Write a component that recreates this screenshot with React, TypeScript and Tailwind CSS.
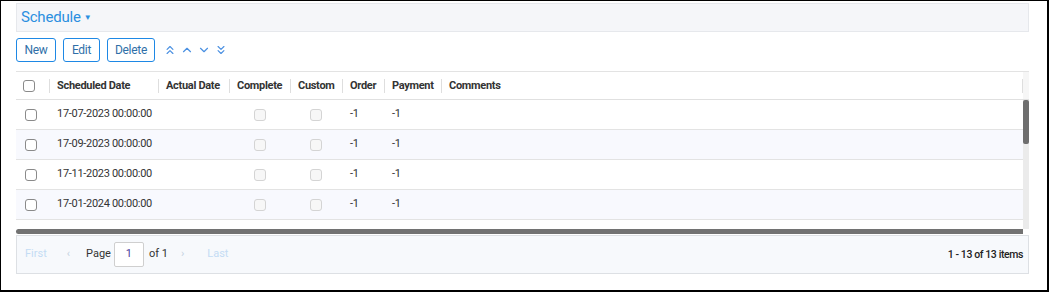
import {ChevronDown, ChevronUp, ChevronsDown, ChevronsUp} from 'lucide-react';

type Row = {scheduled: string; actual: string; order: string; payment: string; comments: string};

const rows: Row[] = [
  {scheduled: '17-07-2023 00:00:00', actual: '', order: '-1', payment: '-1', comments: ''},
  {scheduled: '17-09-2023 00:00:00', actual: '', order: '-1', payment: '-1', comments: ''},
  {scheduled: '17-11-2023 00:00:00', actual: '', order: '-1', payment: '-1', comments: ''},
  {scheduled: '17-01-2024 00:00:00', actual: '', order: '-1', payment: '-1', comments: ''},
];

const cols = 'grid grid-cols-[33px_109px_71px_61px_52px_42px_57px_1fr]';

function Box({disabled}: {disabled?: boolean}) {
  return (
    <span
      className={
        disabled
          ? 'block w-[12px] h-[12px] rounded-[3px] border border-[#d4d4d4] bg-[#f7f7f7]'
          : 'block w-[12px] h-[12px] rounded-[3px] border border-[#8a8a8a] bg-white'
      }
    />
  );
}

function Head({label}: {label: string}) {
  return (
    <div className="flex items-center h-full">
      <span className="w-px h-[14px] bg-[#dedede]" />
      <span className="pl-[7px] pt-[2px] font-bold text-[#333] whitespace-nowrap">{label}</span>
    </div>
  );
}

export default function App() {
  return (
    <div
      className="w-[1049px] h-[292px] bg-white border-l border-t border-r-2 border-b-2 border-black text-[11px] tracking-[-0.3px] text-[#333] overflow-hidden"
      style={{fontFamily: 'Roboto, "Liberation Sans", sans-serif'}}
    >
      <div className="pl-[15px] pr-[18px] pt-[2px]">
        {/* title bar */}
        <div className="h-[29px] flex items-center pl-[4px] bg-[#f5f6f9] border border-[#e6e8ec]">
          <span className="text-[15px] tracking-[-0.2px] text-[#2b8fe0]">Schedule</span>
          <span className="ml-[3px] text-[8px] text-[#2b8fe0]">▼</span>
        </div>

        {/* toolbar */}
        <div className="flex items-center mt-[6px] gap-[7px]">
          <button className="h-[24px] w-[40px] rounded-[3px] border border-[#1e88e5] text-[#2f6fa8] text-[12px]">
            New
          </button>
          <button className="h-[24px] w-[37px] rounded-[3px] border border-[#1e88e5] text-[#2f6fa8] text-[12px]">
            Edit
          </button>
          <button className="h-[24px] w-[48px] rounded-[3px] border border-[#1e88e5] text-[#2f6fa8] text-[12px]">
            Delete
          </button>
          <div className="flex items-center ml-px gap-[3px] text-[#4a90e2]">
            <ChevronsUp size={14} strokeWidth={2} />
            <ChevronUp size={14} strokeWidth={2} />
            <ChevronDown size={14} strokeWidth={2} />
            <ChevronsDown size={14} strokeWidth={2} />
          </div>
        </div>

        {/* grid */}
        <div className="mt-[9px] border-t border-[#e3e3e3]">
          <div className="flex h-[28px] border-b border-[#e0e0e0]">
            <div className={`${cols} flex-1`}>
              <div className="flex items-center pl-[7px]">
                <Box />
              </div>
              <Head label="Scheduled Date" />
              <Head label="Actual Date" />
              <Head label="Complete" />
              <Head label="Custom" />
              <Head label="Order" />
              <Head label="Payment" />
              <div className="flex items-center h-full">
                <span className="w-px h-[14px] bg-[#dedede]" />
                <span className="pl-[7px] pt-[2px] font-bold text-[#333] flex-1">Comments</span>
                <span className="w-px h-[14px] bg-[#dedede]" />
              </div>
            </div>
            <div className="w-[6px] bg-[#f6f6f6]" />
          </div>

          <div className="flex h-[129px]">
            <div className="flex-1">
              {rows.map((r, i) => (
                <div
                  key={r.scheduled}
                  className={`${cols} h-[30px] border-b border-[#e3e3e3] ${i % 2 ? 'bg-[#f8f9fe]' : 'bg-white'}`}
                >
                  <div className="flex items-center pl-[9px]">
                    <Box />
                  </div>
                  <div className="flex items-center pl-[8px] whitespace-nowrap">{r.scheduled}</div>
                  <div className="flex items-center pl-[8px]">{r.actual}</div>
                  <div className="flex items-center justify-center">
                    <Box disabled />
                  </div>
                  <div className="flex items-center justify-center">
                    <Box disabled />
                  </div>
                  <div className="flex items-center pl-[8px]">{r.order}</div>
                  <div className="flex items-center pl-[8px]">{r.payment}</div>
                  <div className="flex items-center pl-[8px]">{r.comments}</div>
                </div>
              ))}
            </div>
            <div className="w-[6px] bg-[#ebebeb] flex flex-col">
              <div className="h-[44px] bg-[#6e6e6e] rounded-[2px]" />
            </div>
          </div>

          <div className="flex">
            <div className="flex-1 h-[5px] bg-[#727272] rounded-l-[3px]" />
            <div className="w-[6px]" />
          </div>
        </div>

        {/* pager */}
        <div className="mt-px h-[39px] flex items-center bg-[#f7f9fc] border border-[#dde0e4] text-[11px] tracking-normal whitespace-nowrap">
          <span className="ml-[8px] shrink-0 text-[#c4dcf4]">First</span>
          <span className="ml-[20px] shrink-0 text-[#c4d2e0]">‹</span>
          <span className="ml-[16px] shrink-0 text-[#333]">Page</span>
          <span className="ml-[3px] shrink-0 w-[30px] h-[25px] flex items-center justify-center bg-white border border-[#cfcfcf] rounded-[2px] text-[#4b3a9a]">
            1
          </span>
          <span className="ml-[5px] shrink-0 text-[#333]">of 1</span>
          <span className="ml-[13px] shrink-0 text-[#c4d2e0]">›</span>
          <span className="ml-[23px] shrink-0 text-[#c4dcf4]">Last</span>
          <span className="ml-auto mr-[5px] text-[10.5px] tracking-[-0.4px] text-[#222] font-medium">
            1 - 13 of 13 items
          </span>
        </div>
      </div>
    </div>
  );
}
